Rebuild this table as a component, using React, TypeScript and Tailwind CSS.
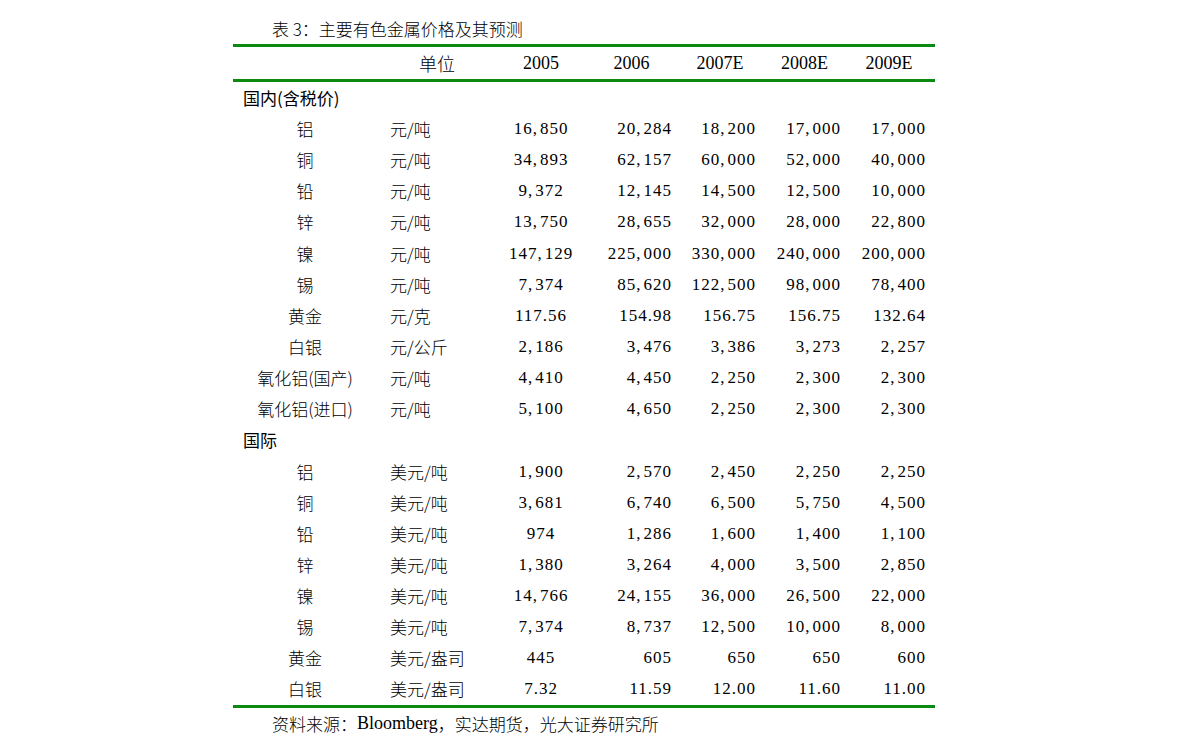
import React from 'react';

type Row = { name: string; unit: string; values: string[] };

const domestic: Row[] = [
  { name: '铝', unit: '元/吨', values: ['16,850', '20,284', '18,200', '17,000', '17,000'] },
  { name: '铜', unit: '元/吨', values: ['34,893', '62,157', '60,000', '52,000', '40,000'] },
  { name: '铅', unit: '元/吨', values: ['9,372', '12,145', '14,500', '12,500', '10,000'] },
  { name: '锌', unit: '元/吨', values: ['13,750', '28,655', '32,000', '28,000', '22,800'] },
  { name: '镍', unit: '元/吨', values: ['147,129', '225,000', '330,000', '240,000', '200,000'] },
  { name: '锡', unit: '元/吨', values: ['7,374', '85,620', '122,500', '98,000', '78,400'] },
  { name: '黄金', unit: '元/克', values: ['117.56', '154.98', '156.75', '156.75', '132.64'] },
  { name: '白银', unit: '元/公斤', values: ['2,186', '3,476', '3,386', '3,273', '2,257'] },
  { name: '氧化铝(国产)', unit: '元/吨', values: ['4,410', '4,450', '2,250', '2,300', '2,300'] },
  { name: '氧化铝(进口)', unit: '元/吨', values: ['5,100', '4,650', '2,250', '2,300', '2,300'] },
];

const intl: Row[] = [
  { name: '铝', unit: '美元/吨', values: ['1,900', '2,570', '2,450', '2,250', '2,250'] },
  { name: '铜', unit: '美元/吨', values: ['3,681', '6,740', '6,500', '5,750', '4,500'] },
  { name: '铅', unit: '美元/吨', values: ['974', '1,286', '1,600', '1,400', '1,100'] },
  { name: '锌', unit: '美元/吨', values: ['1,380', '3,264', '4,000', '3,500', '2,850'] },
  { name: '镍', unit: '美元/吨', values: ['14,766', '24,155', '36,000', '26,500', '22,000'] },
  { name: '锡', unit: '美元/吨', values: ['7,374', '8,737', '12,500', '10,000', '8,000'] },
  { name: '黄金', unit: '美元/盎司', values: ['445', '605', '650', '650', '600'] },
  { name: '白银', unit: '美元/盎司', values: ['7.32', '11.59', '12.00', '11.60', '11.00'] },
];

const cjk = "font-['Noto_Sans_CJK_SC',sans-serif]";
const num = "font-['Liberation_Serif','Noto_Sans_CJK_SC',serif] tracking-[1px]";
const cols = 'grid grid-cols-[144px_120px_88px_93px_84px_85px_88px]';

// SimSun-style wide comma
const Num = ({ v }: { v: string }) => (
  <>
    {v.split(',').map((part, i) => (
      <React.Fragment key={i}>
        {i > 0 && <span className="mr-[2px]">,</span>}
        {part}
      </React.Fragment>
    ))}
  </>
);

const DataRow = ({ row }: { row: Row }) => (
  <div className={`${cols} h-[31.15px] items-center text-[17px] text-black`}>
    <div className={`${cjk} text-center font-light`}>{row.name}</div>
    <div className={`${cjk} pl-[13px] font-light`}>{row.unit}</div>
    <div className={`${num} text-center`}><Num v={row.values[0]} /></div>
    <div className={`${num} text-right pr-[6px]`}><Num v={row.values[1]} /></div>
    <div className={`${num} text-right pr-[6px]`}><Num v={row.values[2]} /></div>
    <div className={`${num} text-right pr-[6px]`}><Num v={row.values[3]} /></div>
    <div className={`${num} text-right pr-[9px]`}><Num v={row.values[4]} /></div>
  </div>
);

const SectionRow = ({ label }: { label: string }) => (
  <div className={`h-[31.15px] flex items-center pl-[10px] text-[17px] text-black ${cjk}`}>{label}</div>
);

export default function App() {
  return (
    <div className="w-[1191px] h-[753px] bg-white overflow-hidden">
      <div className="ml-[233px] w-[702px]">
        <div className={`h-[44px] flex items-center pl-[39px] pt-[13px] text-[17px] text-black font-light ${cjk}`}>
          表 3：主要有色金属价格及其预测
        </div>
        <div className="h-[3px] bg-[#0b8a12]" />
        <div className={`${cols} h-[32px] items-center text-[18px] text-black`}>
          <div />
          <div className={`${cjk} text-center font-light`}>单位</div>
          <div className="font-['Liberation_Serif',serif] text-center">2005</div>
          <div className="font-['Liberation_Serif',serif] text-center">2006</div>
          <div className="font-['Liberation_Serif',serif] text-center">2007E</div>
          <div className="font-['Liberation_Serif',serif] text-center">2008E</div>
          <div className="font-['Liberation_Serif',serif] text-center pr-[4px]">2009E</div>
        </div>
        <div className="h-[3px] bg-[#0b8a12]" />
        <SectionRow label="国内(含税价)" />
        {domestic.map((r, i) => (
          <DataRow key={'d' + i} row={r} />
        ))}
        <SectionRow label="国际" />
        {intl.map((r, i) => (
          <DataRow key={'i' + i} row={r} />
        ))}
        <div className="h-[3px] bg-[#0b8a12]" />
        <div className={`h-[32px] flex items-center pl-[39px] text-[17px] text-black font-light ${cjk}`}>
          资料来源：<span className="font-['Liberation_Serif',serif] text-[18px]">Bloomberg</span>，实达期货，光大证券研究所
        </div>
      </div>
    </div>
  );
}
